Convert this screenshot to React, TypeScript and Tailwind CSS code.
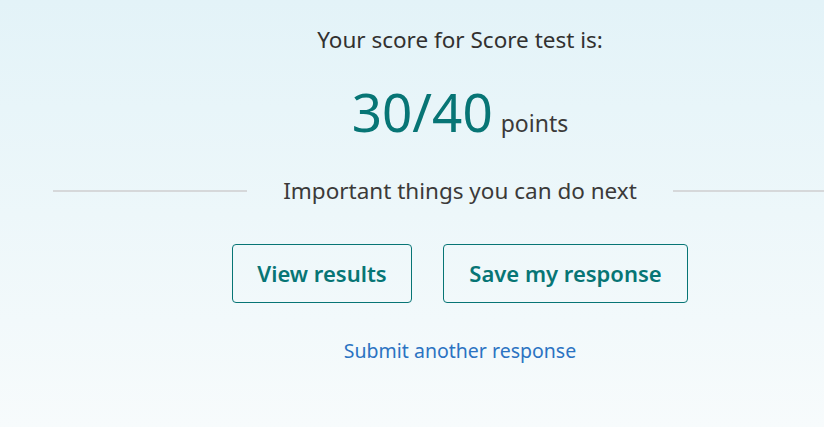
export default function App() {
  return (
    <div
      className="w-full h-[427px] overflow-hidden bg-gradient-to-b from-[#e3f3f8] to-[#f7fbfc] text-[#323130]"
      style={{ fontFamily: '"Noto Sans", "Open Sans", sans-serif' }}
    >
      <div className="w-[814px] ml-[53px] flex flex-col items-center">
        <p className="mt-[26px] text-[22.5px] leading-[28px]">Your score for Score test is:</p>

        <div className="mt-[22px] flex items-baseline gap-2">
          <span className="text-[53px] leading-[72px] text-[#077575]">30/40</span>
          <span className="text-[23px] text-[#3b3a39]">points</span>
        </div>

        <div className="mt-[29px] w-full flex items-center gap-[36px]">
          <div className="flex-1 h-[2px] bg-[#d6d8da]" />
          <span className="text-[22.5px] leading-[28px] text-[#3b3a39]">Important things you can do next</span>
          <div className="flex-1 h-[2px] bg-[#d6d8da]" />
        </div>

        <div className="mt-[39px] flex gap-[31px]">
          <button className="w-[180px] h-[59px] rounded-[4px] border border-[#077575] text-[#077575] text-[22px] font-semibold">
            View results
          </button>
          <button className="w-[245px] h-[59px] rounded-[4px] border border-[#077575] text-[#077575] text-[22px] font-semibold">
            Save my response
          </button>
        </div>

        <a className="mt-[35px] text-[19.5px] leading-[26px] text-[#2b73c2] cursor-pointer">
          Submit another response
        </a>
      </div>
    </div>
  );
}
